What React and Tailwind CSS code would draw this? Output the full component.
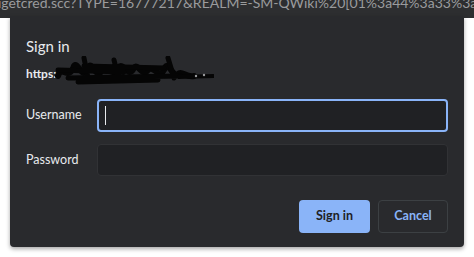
export default function App() {
    return (
        <div className="w-[474px] h-[257px] bg-white overflow-hidden relative" style={{ fontFamily: '"Lato", "Open Sans", sans-serif' }}>
            <div className="h-[18px] bg-[#2d2e30] overflow-hidden">
                <div className="-mt-[6px] text-[14px] leading-[18px] text-[#9a9b9d] whitespace-nowrap -ml-[2px]">
                    igetcred.scc?TYPE=16777217&amp;REALM=-SM-QWiki%20[01%3a44%3a33%3a33%3a
                </div>
            </div>
            <div className="absolute left-[10px] top-[16px] w-[454px] h-[231px] bg-[#292a2d] rounded-b-[4px] shadow-[0_2px_4px_rgba(0,0,0,0.35)] px-[16px]">
                <h2 className="mt-[20px] text-[15px] leading-[20px] text-[#e8eaed]">Sign in</h2>
                <div className="relative mt-[8px] h-[20px] flex items-center">
                    <span className="text-[12px] font-bold text-[#e8eaed]">https:</span>
                    <svg className="absolute left-[28px] top-[-8px]" width="160" height="30" viewBox="0 0 160 30">
                        <path d="M4 20 C8 8 14 26 20 10 C24 4 28 26 34 12 C38 2 42 26 48 14 C52 6 58 24 64 12 C70 4 74 24 80 12 C84 6 88 22 94 14 C100 8 104 24 110 14 C114 2 118 22 124 18 C128 14 132 22 140 20"
                            fill="none" stroke="#050505" strokeWidth="6" strokeLinecap="round" />
                        <path d="M4 14 L70 16 M14 22 L126 20 M30 10 L110 12 M24 26 L104 24 M114 2 L120 22 M30 2 L34 22 M60 4 L64 20"
                            fill="none" stroke="#050505" strokeWidth="5" strokeLinecap="round" />
                        <path d="M124 21 L160 20" fill="none" stroke="#050505" strokeWidth="4" />
                        <circle cx="142" cy="20" r="1.2" fill="#9a9b9d" />
                        <circle cx="150" cy="19" r="1.2" fill="#9a9b9d" />
                    </svg>
                </div>
                <form className="mt-[15px]">
                    <div className="flex items-center">
                        <label className="w-[71px] text-[12.5px] text-[#e8eaed]">Username</label>
                        <div className="flex-1 h-[33px] rounded-[4px] border-2 border-[#8ab4f8] bg-[#202124] flex items-center px-[6px]">
                            <div className="w-px h-[19px] bg-[#e8eaed]" />
                        </div>
                    </div>
                    <div className="flex items-center mt-[12px]">
                        <label className="w-[71px] text-[12.5px] text-[#e8eaed]">Password</label>
                        <div className="flex-1 h-[32px] rounded-[4px] border border-[#313235] bg-[#202124]" />
                    </div>
                    <div className="flex justify-end gap-[8px] mt-[24px]">
                        <button type="button" className="w-[71px] h-[33px] rounded-[4px] bg-[#8ab4f8] text-[#202124] text-[12.5px] font-bold">
                            Sign in
                        </button>
                        <button type="button" className="w-[70px] h-[33px] rounded-[4px] border border-[#3c4043] text-[#8ab4f8] text-[12.5px] font-bold">
                            Cancel
                        </button>
                    </div>
                </form>
            </div>
        </div>
    );
}
